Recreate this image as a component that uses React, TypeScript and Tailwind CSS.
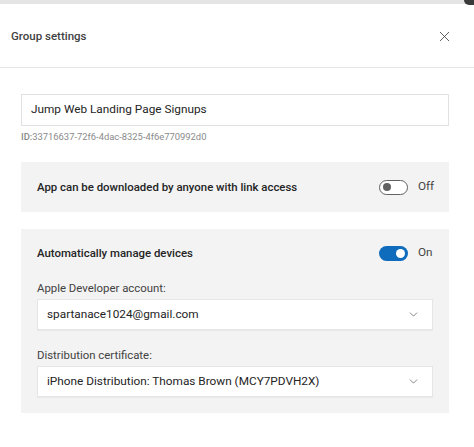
import { X, ChevronDown } from 'lucide-react'

const font = { fontFamily: 'Roboto, "Noto Sans", Arial, sans-serif' }

const Toggle = ({ on }: { on: boolean }) => (
    <div className='flex items-center gap-[10px]'>
        {on ? (
            <div className='flex items-center justify-end w-[29px] h-[15px] rounded-full bg-[#0f6cbd] px-[3px]'>
                <div className='w-[9px] h-[9px] rounded-full bg-white'></div>
            </div>
        ) : (
            <div className='flex items-center justify-start w-[29px] h-[15px] rounded-full border border-[#616161] bg-white px-[3px]'>
                <div className='w-[8px] h-[8px] rounded-full bg-[#616161]'></div>
            </div>
        )}
        <span className='text-[11.7px] text-[#424242] w-[15px]'>{on ? 'On' : 'Off'}</span>
    </div>
)

const Dropdown = ({ value }: { value: string }) => (
    <div className='flex items-center justify-between h-[31px] bg-white border border-[#e6e6e6] pl-[9px] pr-[12px] shadow-[0_1px_1px_rgba(0,0,0,0.04)]'>
        <span className='text-[11.8px] text-[#242424]'>{value}</span>
        <ChevronDown size={13} strokeWidth={1.4} className='text-[#616161]' />
    </div>
)

export default function App() {
    return (
        <div className='w-[474px] h-[447px] bg-white overflow-hidden flex flex-col' style={font}>
            <div className='flex h-[4px] bg-[#e4e4e4] justify-end'>
                <div className='w-[10px] h-[5px] bg-[#3a3a3a] rounded-bl-[6px]'></div>
            </div>
            <div className='flex items-center justify-between h-[64px] pt-[2px] pl-[11px] pr-[21px] border-b border-[#e6e6e6]'>
                <span className='text-[11.5px] font-medium text-[#424242]'>Group settings</span>
                <X size={17} strokeWidth={1.2} className='text-[#424242]' />
            </div>
            <div className='flex flex-col pl-[21px] pr-[25px] pt-[26px]'>
                <div className='flex items-center h-[32px] border border-[#e1e1e1] px-[9px]'>
                    <span className='text-[11.8px] text-[#242424]'>Jump Web Landing Page Signups</span>
                </div>
                <div className='mt-[4px] text-[9.4px] text-[#8a8a8a]'>
                    <span className='font-medium'>ID:</span>33716637-72f6-4dac-8325-4f6e770992d0
                </div>
                <div className='flex items-center justify-between mt-[18px] h-[50px] bg-[#f3f3f3] pl-[16px] pr-[16px]'>
                    <span className='text-[11.4px] font-medium text-[#242424]'>App can be downloaded by anyone with link access</span>
                    <Toggle on={false} />
                </div>
                <div className='flex flex-col mt-[17px] bg-[#f3f3f3] px-[16px] pt-[16px] pb-[16px]'>
                    <div className='flex items-center justify-between h-[16px]'>
                        <span className='text-[11.4px] font-medium text-[#242424]'>Automatically manage devices</span>
                        <Toggle on />
                    </div>
                    <span className='mt-[19px] text-[11.4px] leading-[16px] text-[#424242]'>Apple Developer account:</span>
                    <div className='mt-[3px]'>
                        <Dropdown value='spartanace1024@gmail.com' />
                    </div>
                    <span className='mt-[17px] text-[11.4px] leading-[16px] text-[#424242]'>Distribution certificate:</span>
                    <div className='mt-[3px]'>
                        <Dropdown value='iPhone Distribution: Thomas Brown (MCY7PDVH2X)' />
                    </div>
                </div>
            </div>
        </div>
    )
}
